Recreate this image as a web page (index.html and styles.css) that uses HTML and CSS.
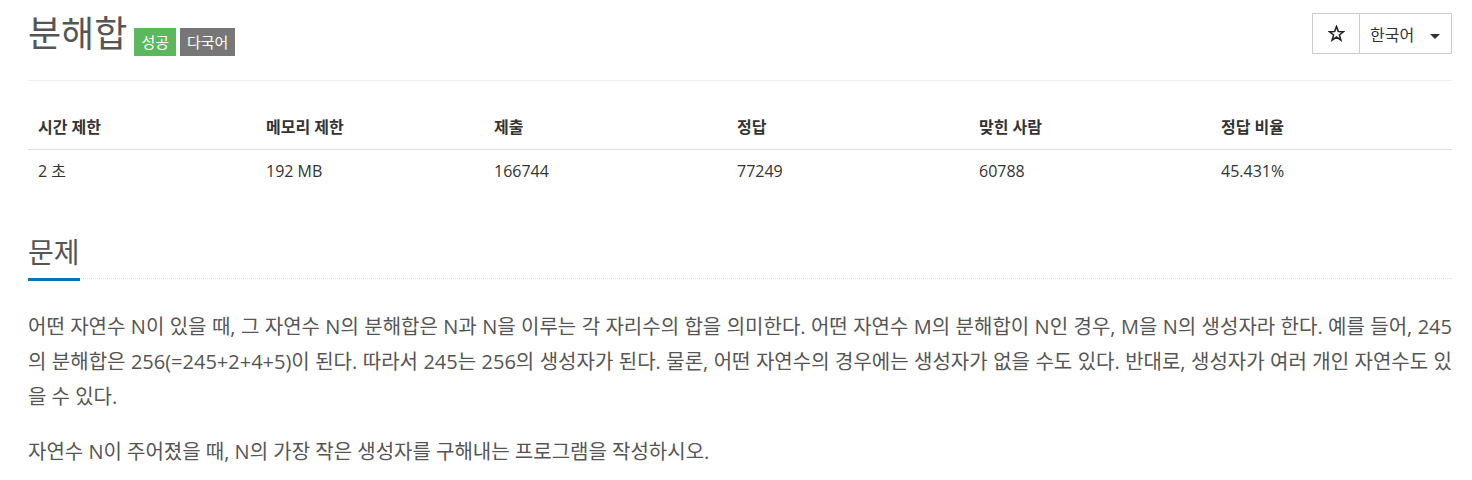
FILE: index.html
```html
<!DOCTYPE html>
<html lang="ko">
<head>
    <meta charset="UTF-8">
    <title>분해합</title>
    <link rel="stylesheet" href="styles.css">
</head>
<body>
    <div class="page">
        <!-- Title and actions -->
        <div class="page-header">
            <h1 class="title">
                <span class="title-text">분해합</span>
                <span class="label label-success">성공</span>
                <span class="label label-default">다국어</span>
            </h1>
            <div class="btn-group">
                <button class="btn btn-star" type="button" aria-label="star">
                    <svg width="17" height="17" viewBox="0 0 24 24">
                        <path d="M12 2.2 14.6 9.3 22 9.4 16.1 14 18.2 21.3 12 17 5.8 21.3 7.9 14 2 9.4 9.4 9.3Z" fill="none" stroke="#222" stroke-width="2.2" stroke-linejoin="miter"/>
                    </svg>
                </button>
                <button class="btn btn-lang" type="button">한국어 <span class="caret"></span></button>
            </div>
        </div>

        <!-- Problem info -->
        <table class="info-table">
            <thead>
                <tr>
                    <th class="col-1">시간 제한</th>
                    <th class="col-2">메모리 제한</th>
                    <th class="col-3">제출</th>
                    <th class="col-4">정답</th>
                    <th class="col-5">맞힌 사람</th>
                    <th class="col-6">정답 비율</th>
                </tr>
            </thead>
            <tbody>
                <tr>
                    <td>2 초</td>
                    <td>192 MB</td>
                    <td>166744</td>
                    <td>77249</td>
                    <td>60788</td>
                    <td>45.431%</td>
                </tr>
            </tbody>
        </table>

        <!-- Description -->
        <section class="problem-section">
            <div class="headline">
                <h2>문제</h2>
            </div>
            <div class="problem-text">
                <p>어떤 자연수 N이 있을 때, 그 자연수 N의 분해합은 N과 N을 이루는 각 자리수의 합을 의미한다. 어떤 자연수 M의 분해합이 N인 경우, M을 N의 생성자라 한다. 예를 들어, 245의 분해합은 256(=245+2+4+5)이 된다. 따라서 245는 256의 생성자가 된다. 물론, 어떤 자연수의 경우에는 생성자가 없을 수도 있다. 반대로, 생성자가 여러 개인 자연수도 있을 수 있다.</p>
                <p>자연수 N이 주어졌을 때, N의 가장 작은 생성자를 구해내는 프로그램을 작성하시오.</p>
            </div>
        </section>
    </div>
</body>
</html>
```

FILE: styles.css
```css
* {
    margin: 0;
    padding: 0;
    box-sizing: border-box;
}

body {
    font-family: 'Open Sans', 'Noto Sans CJK KR', sans-serif;
    font-size: 16px;
    color: #333;
    background-color: #fff;
}

.page {
    padding: 0 20px 0 28px;
}

/* Header */
.page-header {
    display: flex;
    justify-content: space-between;
    align-items: flex-start;
    padding-top: 12px;
    height: 81px;
    border-bottom: 1px solid #eee;
}

.title {
    display: flex;
    align-items: flex-start;
    gap: 4px;
    font-weight: normal;
}

.title-text {
    font-size: 36px;
    line-height: 44px;
    color: #555;
    margin-right: 3px;
}

.label {
    display: inline-block;
    margin-top: 16px;
    height: 28px;
    line-height: 28px;
    padding: 0 7px;
    font-size: 15px;
    font-weight: normal;
    color: #fff;
}

.label-success {
    background-color: #5cb85c;
}

.label-default {
    background-color: #777;
}

.btn-group {
    display: flex;
    margin-top: 1px;
}

.btn {
    height: 41px;
    background-color: #fff;
    border: 1px solid #ccc;
    font-family: inherit;
    font-size: 16px;
    color: #333;
    cursor: pointer;
}

.btn-star {
    display: flex;
    align-items: center;
    justify-content: center;
    width: 48px;
}

.btn-lang {
    width: 93px;
    margin-left: -1px;
    text-align: left;
    padding-left: 10px;
}

.caret {
    display: inline-block;
    width: 0;
    height: 0;
    margin-left: 12px;
    vertical-align: middle;
    border-top: 5px solid #333;
    border-left: 5px solid transparent;
    border-right: 5px solid transparent;
}

/* Info table */
.info-table {
    width: 100%;
    margin-top: 25px;
    border-collapse: collapse;
    table-layout: fixed;
}

.info-table th,
.info-table td {
    padding: 10px;
    line-height: 23px;
    text-align: left;
}

.info-table th {
    font-weight: bold;
    border-bottom: 1px solid #ddd;
}

.col-1 { width: 228px; }
.col-2 { width: 228px; }
.col-3 { width: 243px; }
.col-4 { width: 242px; }
.col-5 { width: 242px; }
.col-6 { width: 241px; }

/* Problem section */
.problem-section {
    margin-top: 39px;
}

.headline {
    border-bottom: 1px dotted #ddd;
}

.headline h2 {
    display: inline-block;
    font-size: 28px;
    font-weight: normal;
    line-height: 40px;
    color: #555;
    padding-bottom: 6px;
    border-bottom: 3px solid #0076c0;
    margin-bottom: -3px;
}

.problem-text {
    padding-top: 30px;
    font-size: 20px;
    line-height: 35px;
    color: #555;
    text-align: justify;
    word-break: break-all;
}

.problem-text p {
    margin-bottom: 20px;
}
```
